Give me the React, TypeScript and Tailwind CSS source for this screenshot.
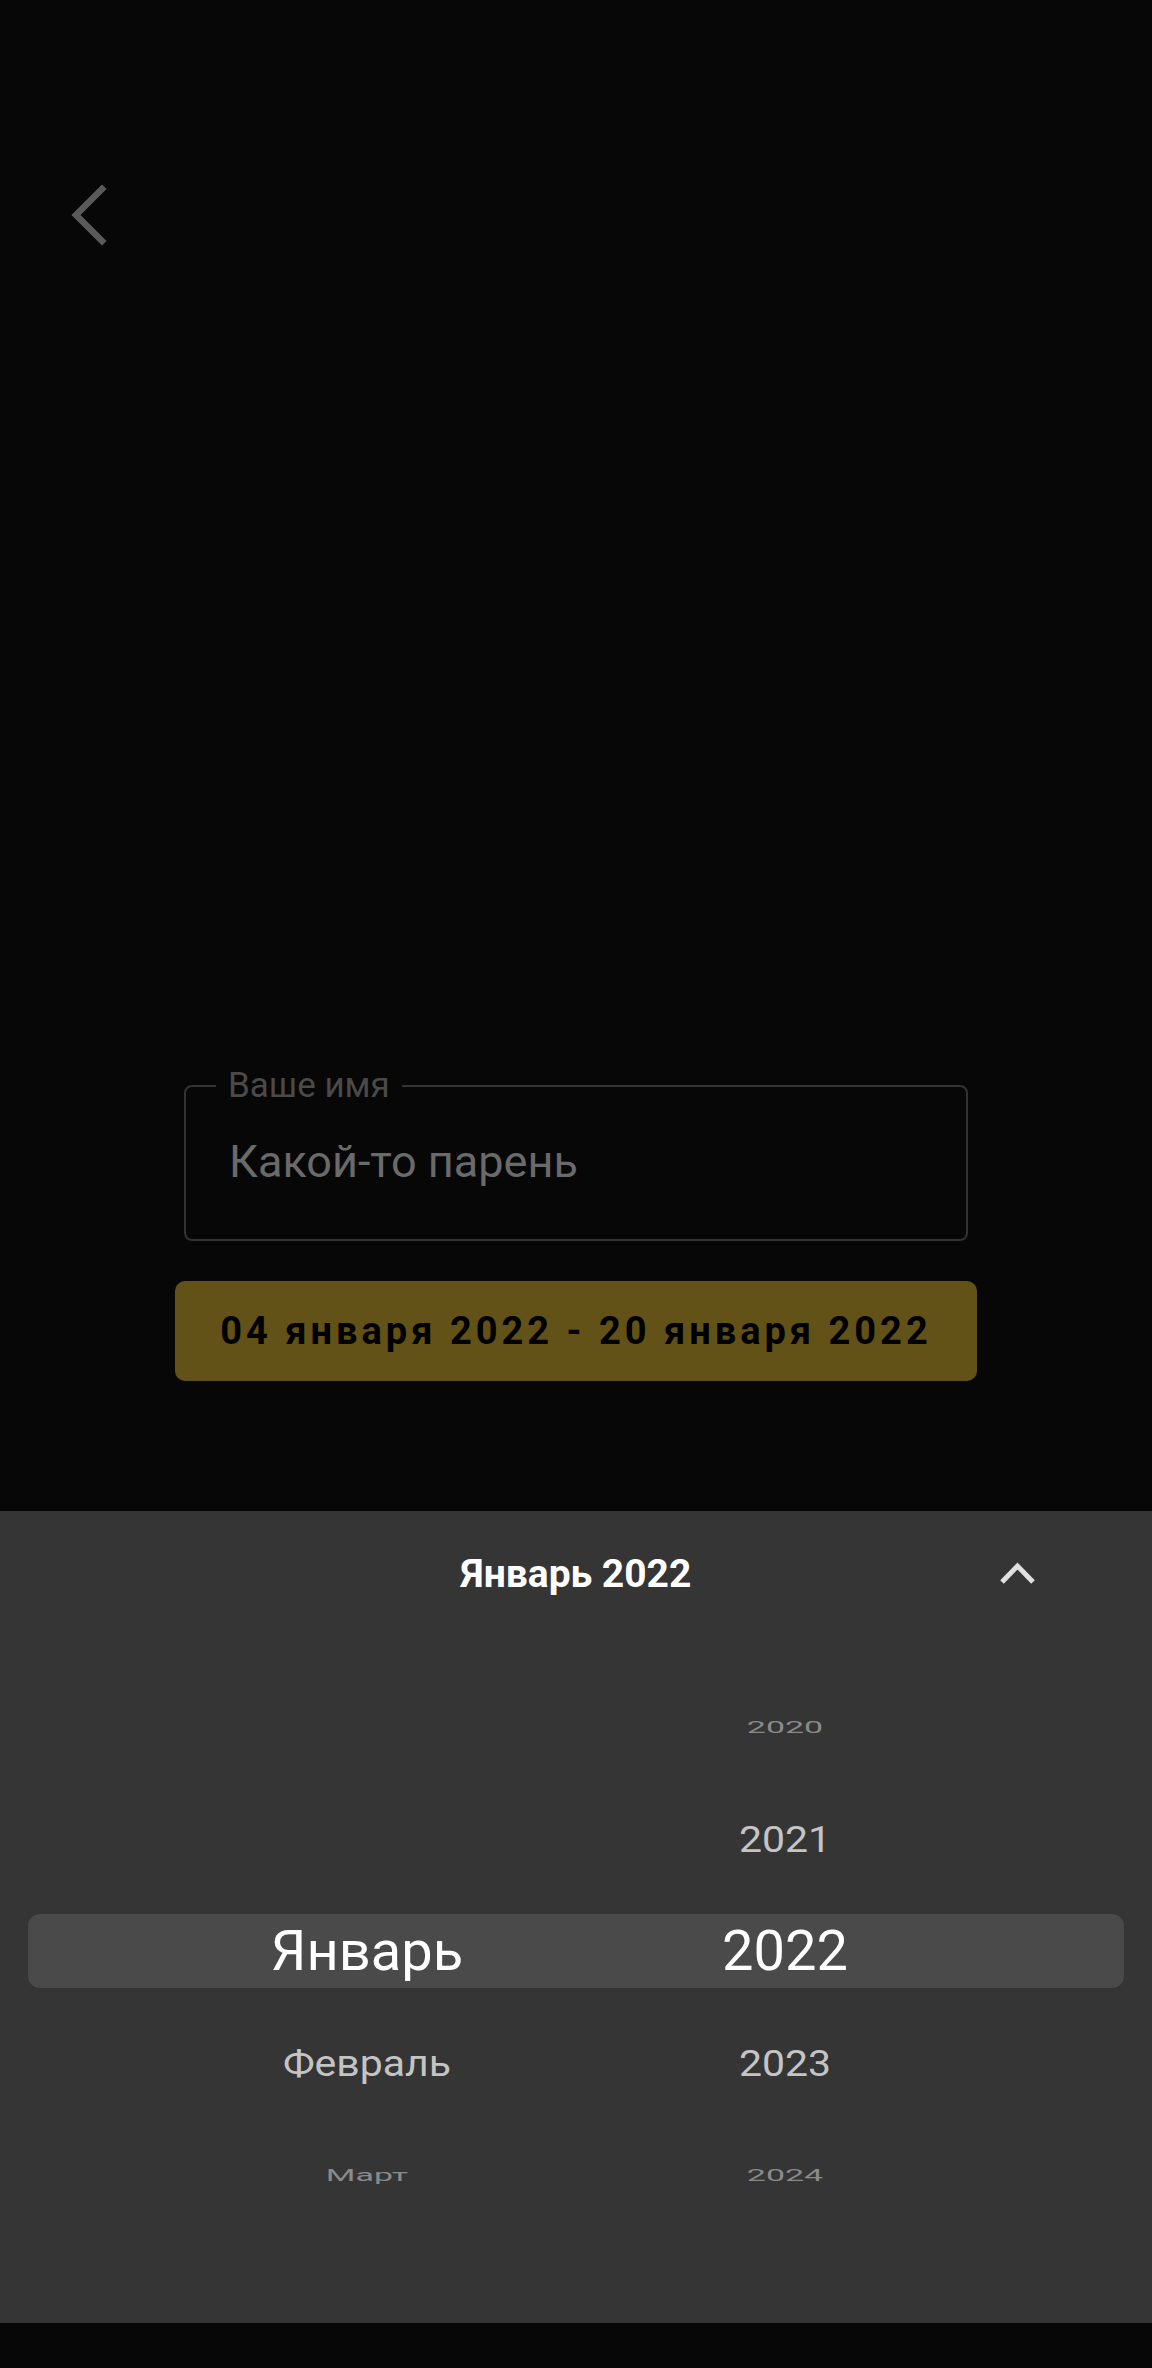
const font = { fontFamily: 'Roboto, "Noto Sans", sans-serif' };

/** One line of the wheel: a month cell and a year cell. */
function WheelRow({
  month,
  year,
  kind,
}: {
  month?: string;
  year: string;
  kind: 'far' | 'near' | 'selected';
}) {
  if (kind === 'selected') {
    return (
      <div className="h-[112px] flex items-center">
        <div className="mx-[28px] w-full h-[74px] rounded-[12px] bg-[#4a4a4a] flex items-center">
          <div className="w-[130px]" />
          <div className="w-[418px] text-center text-[56px] leading-none text-white">{month}</div>
          <div className="w-[418px] text-center text-[56px] leading-none text-white">{year}</div>
        </div>
      </div>
    );
  }
  const cls =
    kind === 'near'
      ? 'text-[41px] leading-none text-[#c4c4c4] scale-y-[0.92]'
      : 'text-[34px] leading-none text-[#8a8a8a] scale-y-[0.46]';
  return (
    <div className="h-[112px] flex items-center">
      <div className="w-[158px]" />
      <div className={`w-[418px] text-center ${cls}`}>{month ?? ''}</div>
      <div className={`w-[418px] text-center ${cls}`}>{year}</div>
    </div>
  );
}

export default function App() {
  return (
    <div className="w-[1152px] h-[2368px] bg-[#070707] flex flex-col" style={font}>
      {/* Dimmed page behind the sheet */}
      <div className="h-[1511px] flex flex-col">
        <div className="pt-[183px] pl-[62px]">
          <svg width="56" height="64" viewBox="0 0 56 64" fill="none">
            <polyline points="40,6 14,32 40,58" stroke="#5a5a5a" strokeWidth="6.5" strokeLinecap="square" />
          </svg>
        </div>

        <div className="mt-[821px] mx-auto w-[802px] flex flex-col gap-[40px]">
          <fieldset className="mx-[9px] h-[173px] border-2 border-[#333333] rounded-[8px] px-[30px]">
            <legend className="px-[12px] text-[35px] leading-none text-[#4a4a4a]">Ваше имя</legend>
            <div className="mt-[36px] ml-[13px] text-[45px] leading-none text-[#6a6a6a]">Какой-то парень</div>
          </fieldset>
          <button className="h-[100px] rounded-[10px] bg-[#635218] text-[38px] font-bold tracking-[0.105em] text-black">
            04 января 2022 - 20 января 2022
          </button>
        </div>
      </div>

      {/* Month / year picker sheet */}
      <div className="h-[812px] bg-[#353535] flex flex-col">
        <div className="h-[126px] flex items-center relative">
          <div className="flex-1 text-center text-[39px] font-bold text-white">Январь 2022</div>
          <svg className="absolute right-[116px] top-[50px]" width="37" height="24" viewBox="0 0 37 24" fill="none">
            <polyline points="3,21 18.5,5 34,21" stroke="#e0e0e0" strokeWidth="5" />
          </svg>
        </div>
        <div className="pt-[34px] flex flex-col">
          <WheelRow year="2020" kind="far" />
          <WheelRow year="2021" kind="near" />
          <WheelRow month="Январь" year="2022" kind="selected" />
          <WheelRow month="Февраль" year="2023" kind="near" />
          <WheelRow month="Март" year="2024" kind="far" />
        </div>
      </div>
    </div>
  );
}
